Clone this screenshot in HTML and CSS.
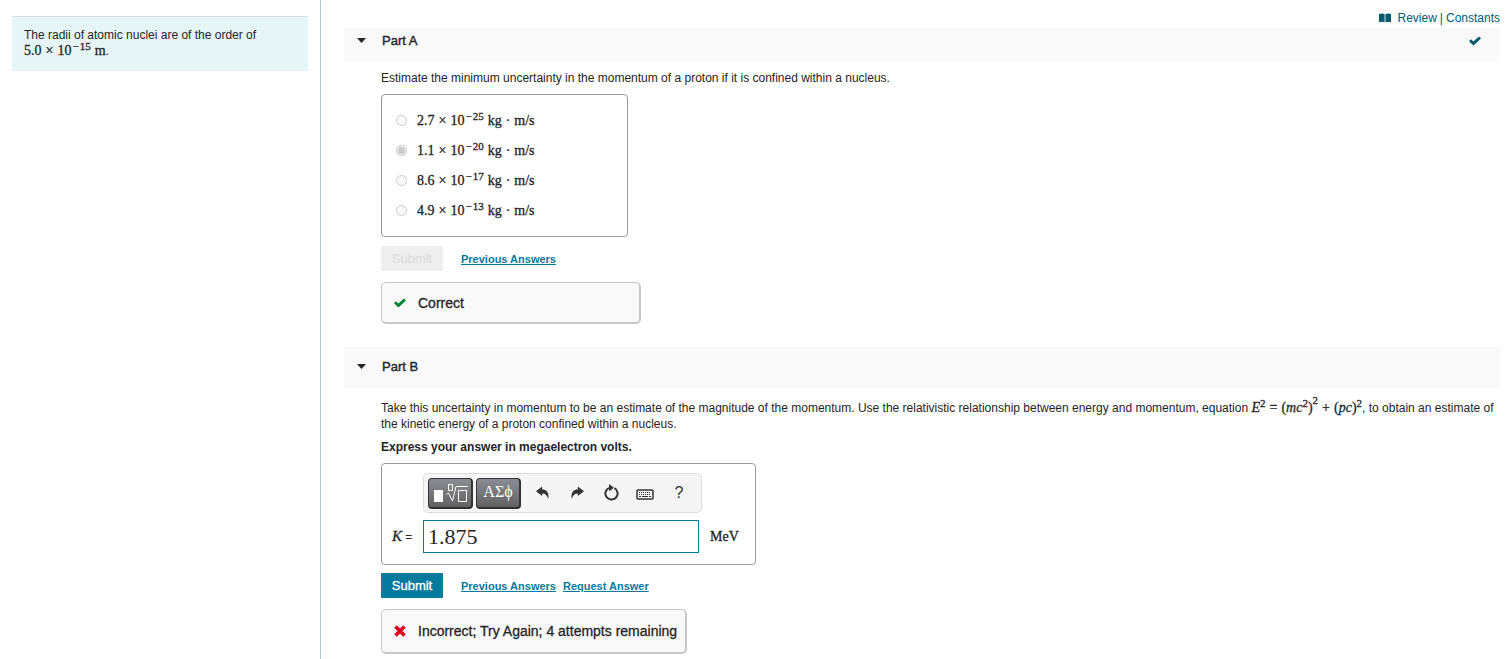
FILE: index.html
```html
<!DOCTYPE html>
<html lang="en">
<head>
    <meta charset="UTF-8">
    <meta name="viewport" content="width=device-width, initial-scale=1.0">
    <title>Uncertainty in a Nucleus</title>
    <link rel="stylesheet" href="styles.css">
</head>
<body>
    <div class="page">
        <aside class="sidebar">
            <div class="intro">
                The radii of atomic nuclei are of the order of
                <span class="math">5.0<i class="op">×</i>10<sup><b>−</b>15</sup><span class="unit">m</span></span>.
            </div>
        </aside>

        <main class="content">
            <nav class="tools">
                <svg width="12" height="10" viewBox="0 0 12 10"><path d="M0 1Q3 0 5.600 1V9.200Q3 8.400 0 9.200ZM6.400 1Q9 0 12 1V9.200Q9 8.400 6.400 9.200Z" fill="#005a70"/></svg>
                <a href="#review">Review</a><span>|</span><a href="#constants">Constants</a>
            </nav>

            <section>
                <header class="part-head part-head-first">
                    <button class="toggle" type="button" aria-label="Collapse Part A"></button>
                    <h2>Part A</h2>
                    <svg class="done" width="12" height="10" viewBox="0 0 12 10"><path d="M0 5.200 2 3.200 4.400 5.400 10 .5 12 2.400 4.500 9.500Z" fill="#005a70"/></svg>
                </header>
                <div class="part-body">
                    <p>Estimate the minimum uncertainty in the momentum of a proton if it is confined within a nucleus.</p>
                    <div class="box choices">
                        <label><input type="radio" name="momentum" disabled><span class="math">2.7<i class="op">×</i>10<sup><b>−</b>25</sup><span class="unit">kg<i class="dot">·</i>m/s</span></span></label>
                        <label><input type="radio" name="momentum" disabled checked><span class="math">1.1<i class="op">×</i>10<sup><b>−</b>20</sup><span class="unit">kg<i class="dot">·</i>m/s</span></span></label>
                        <label><input type="radio" name="momentum" disabled><span class="math">8.6<i class="op">×</i>10<sup><b>−</b>17</sup><span class="unit">kg<i class="dot">·</i>m/s</span></span></label>
                        <label><input type="radio" name="momentum" disabled><span class="math">4.9<i class="op">×</i>10<sup><b>−</b>13</sup><span class="unit">kg<i class="dot">·</i>m/s</span></span></label>
                    </div>
                    <div class="actions">
                        <button class="submit" type="button" disabled>Submit</button>
                        <a href="#previous-a">Previous Answers</a>
                    </div>
                    <div class="feedback correct">
                        <svg width="12" height="10" viewBox="0 0 12 10"><path d="M0 5.200 2 3.200 4.400 5.400 10 .5 12 2.400 4.500 9.500Z" fill="#038238"/></svg>
                        <span>Correct</span>
                    </div>
                </div>
            </section>

            <section>
                <header class="part-head">
                    <button class="toggle" type="button" aria-label="Collapse Part B"></button>
                    <h2>Part B</h2>
                </header>
                <div class="part-body part-b">
                    <p>Take this uncertainty in momentum to be an estimate of the magnitude of the momentum. Use the relativistic relationship between energy and momentum, equation <span class="math"><em>E</em><sup>2</sup><i class="op">=</i>(<em>mc</em><sup>2</sup>)<sup class="high">2</sup><i class="op">+</i>(<em>pc</em>)<sup>2</sup></span>, to obtain an estimate of the kinetic energy of a proton confined within a nucleus.</p>
                    <p class="express">Express your answer in megaelectron volts.</p>
                    <div class="box answer">
                        <div class="toolbar">
                            <button class="palette" type="button" aria-label="Templates">
                                <svg width="36" height="22" viewBox="0 0 36 22" fill="none" stroke="#fff"><path d="M2 8h9v12H2z" fill="#fff" stroke="none"/><path d="M16.500 2.500h4v6h-4zM14.500 12.500l2-1.500 4 8L24 4.500h12"/><path d="M26.500 8.500h8v11h-8z"/></svg>
                            </button>
                            <button class="palette" type="button">ΑΣϕ</button>
                            <button class="tool" type="button" aria-label="Undo">
                                <svg width="14" height="14" viewBox="0 0 14 14"><path d="M0 5.200 6.200.5V3.500C10.500 3.500 13.200 6 12.300 13 11 9.200 9.200 7.600 6.200 7.500V10Z" fill="#333"/></svg>
                            </button>
                            <button class="tool" type="button" aria-label="Redo">
                                <svg width="14" height="14" viewBox="0 0 14 14"><path d="M14 5.200 7.800.5V3.500C3.500 3.500.8 6 1.700 13 3 9.200 4.800 7.600 7.800 7.500V10Z" fill="#333"/></svg>
                            </button>
                            <button class="tool" type="button" aria-label="Reset">
                                <svg width="16" height="18" viewBox="0 0 16 18"><path d="M11.500 4.200A6.100 6.100 0 1 1 7 3.600" fill="none" stroke="#333" stroke-width="2"/><path d="M6 0 11 3.800 6 7.200Z" fill="#333"/></svg>
                            </button>
                            <button class="tool" type="button" aria-label="Keyboard shortcuts">
                                <svg class="keys" width="18" height="11" viewBox="0 0 18 11" fill="none" stroke="#333"><rect x="1" y="1" width="16" height="9" rx="1" stroke-width="1.500"/><path d="M3 3.500h12M3 5.500h12" stroke-dasharray="1 1"/><path d="M3 7.500h2M6 7.500h6M13 7.500h2"/></svg>
                            </button>
                            <button class="tool help" type="button">?</button>
                        </div>
                        <label for="energy"><em>K</em> =</label>
                        <input id="energy" type="text" value="1.875">
                        <span class="mev">MeV</span>
                    </div>
                    <div class="actions">
                        <button class="submit" type="button">Submit</button>
                        <a href="#previous-b">Previous Answers</a>
                        <a href="#request">Request Answer</a>
                    </div>
                    <div class="feedback incorrect">
                        <svg width="12" height="12" viewBox="0 0 12 12"><path d="M1.500 1.500 10.500 10.500M10.500 1.500 1.500 10.500" stroke="#db0020" stroke-width="3.600"/></svg>
                        <span>Incorrect; Try Again; 4 attempts remaining</span>
                    </div>
                </div>
            </section>
        </main>
    </div>
</body>
</html>
```
FILE: styles.css
```css
* {
    box-sizing: border-box;
}

body {
    margin: 0;
    font: 12px/16px "Liberation Sans", Arial, sans-serif;
    color: #252525;
    background: #fff;
}

button {
    font-family: inherit;
    border: none;
    padding: 0;
    cursor: pointer;
}

svg {
    display: block;
    flex: none;
}

p {
    margin: 0;
}

.page {
    display: flex;
    min-height: 100vh;
}

.sidebar {
    flex: none;
    width: 321px;
    padding: 16px 12px;
    border-right: 1px solid #b4c8d8;
}

.intro {
    padding: 10px 40px 12px 12px;
    border-top: 1px solid #d5dcdc;
    background: #e6f6f7;
}

.content {
    flex: 1;
    min-width: 0;
    padding: 0 6px 0 23px;
}

.tools {
    display: flex;
    align-items: center;
    justify-content: flex-end;
    gap: 3px;
    height: 28px;
    padding-top: 8px;
    color: #005a70;
}

.tools svg {
    margin-right: 3px;
}

.tools a {
    color: #005a70;
    text-decoration: none;
}

/* part headers */
.part-head {
    display: flex;
    align-items: center;
    height: 41px;
    padding: 0 19px 2px 13px;
    background: #f9f9f9;
}

.part-head-first {
    height: 34px;
    padding-bottom: 9px;
}

.part-head h2 {
    margin: 0 auto 0 16px;
    font-size: 13px;
    font-weight: normal;
    -webkit-text-stroke: 0.4px;
}

.toggle {
    width: 9px;
    height: 5px;
    background: #252525;
    clip-path: polygon(0 0, 100% 0, 50% 100%);
}

.part-body {
    padding: 8px 0 23px 37px;
}

.part-b {
    padding-top: 12px;
    padding-bottom: 5px;
}

/* formulas */
.math,
.mev {
    font-family: "Liberation Serif", "Times New Roman", serif;
    font-size: 14px;
    -webkit-text-stroke: 0.3px;
}

.math {
    white-space: nowrap;
}

.math i {
    font-style: normal;
}

.math sup {
    font-size: 11px;
    line-height: 0;
    vertical-align: 5px;
}

.math sup b {
    font-weight: normal;
    padding: 0 1px;
}

.math sup.high {
    vertical-align: 8px;
}

.op {
    margin: 0 4px;
}

.dot {
    margin: 0 4px;
}

.unit {
    margin-left: 4px;
}

/* answer boxes */
.box {
    border: 1px solid #999;
    border-radius: 4px;
}

.choices {
    width: 247px;
    margin-top: 8px;
    padding: 10px 14px 11px;
}

.choices label {
    display: flex;
    align-items: center;
    gap: 10px;
    height: 30px;
}

.choices .math {
    padding-top: 2px;
}

.choices input {
    appearance: none;
    width: 11px;
    height: 11px;
    margin: 0;
    border: 1px solid #ccc;
    border-radius: 50%;
    background: #f8f8f8;
}

.choices input:checked {
    background: #ccc;
    box-shadow: inset 0 0 0 1px #f8f8f8;
}

.actions {
    display: flex;
    align-items: center;
    gap: 7px;
    margin: 9px 0 11px;
}

.part-b .actions {
    margin-top: 8px;
}

.actions a {
    font-size: 11px;
    font-weight: bold;
    color: #047a9c;
}

.submit {
    width: 62px;
    height: 25px;
    margin-right: 11px;
    font-size: 13px;
    color: #fff;
    background: #047a9c;
    border-radius: 1px;
    -webkit-text-stroke: 0.3px;
}

.submit:disabled {
    color: #dedede;
    background: #efefef;
    cursor: default;
}

.feedback {
    display: flex;
    align-items: center;
    height: 42px;
    padding-left: 12px;
    border: 1px solid #c7c7c7;
    border-width: 1px 2px 2px 1px;
    border-radius: 5px;
    background: #f9f9f9;
    font-size: 14px;
    gap: 12px;
    -webkit-text-stroke: 0.3px;
}

.correct {
    width: 260px;
}

.incorrect {
    width: 306px;
    height: 45px;
}

.express {
    margin: 7px 0 8px;
    font-weight: bold;
}

.answer {
    display: grid;
    grid-template-columns: 31px 276px auto;
    align-items: center;
    row-gap: 7px;
    width: 375px;
    padding: 9px 10px 11px;
}

.toolbar {
    grid-column: 2 / 4;
    display: flex;
    align-items: center;
    width: 279px;
    height: 40px;
    padding: 0 4px;
    border: 1px solid #ddd;
    border-radius: 5px;
    background: #f5f5f5;
}

.palette {
    display: flex;
    justify-content: center;
    width: 45px;
    height: 31px;
    margin-right: 3px;
    padding-top: 3px;
    border: 1px solid #333;
    border-width: 1px 2px 2px 1px;
    border-radius: 4px;
    background: linear-gradient(#8c8c94, #626262);
    color: #fff;
    font: 16px/20px "Liberation Serif", "Times New Roman", serif;
}

.palette + .tool {
    margin-left: 2px;
}

.tool {
    display: flex;
    align-items: center;
    justify-content: center;
    flex: none;
    width: 34px;
    height: 30px;
    background: none;
    color: #333;
}

.keys {
    margin-top: 3px;
}

.help {
    font-size: 16px;
}

.answer label {
    font-size: 12px;
}

.answer label em {
    font: italic 15px/16px "Liberation Serif", "Times New Roman", serif;
    -webkit-text-stroke: 0.3px;
}

.answer input {
    width: 276px;
    height: 33px;
    padding: 0 4px;
    border: 1px solid #047a9c;
    color: #252525;
    font: 22px "Liberation Serif", "Times New Roman", serif;
}

.mev {
    margin-left: 11px;
}
```
